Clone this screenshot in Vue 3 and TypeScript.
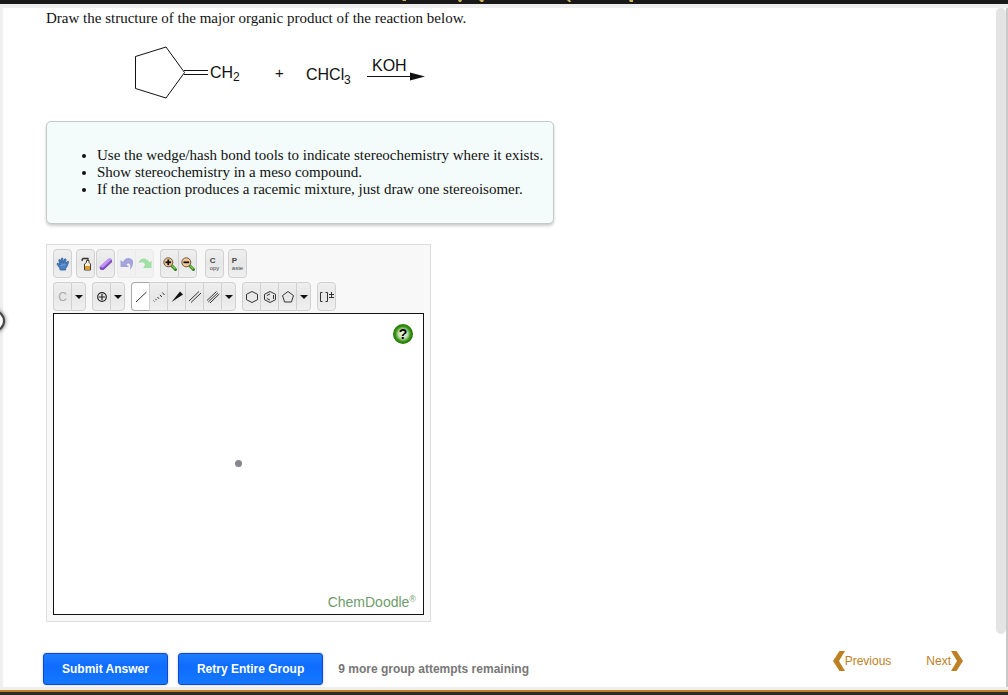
<script setup lang="ts">
import { ref } from 'vue'

interface Tool {
  id: string
  label: string
  kind?: 'drop'
  faded?: boolean
}

interface Group {
  tools: Tool[]
  gap: 'none' | 'hair' | 'tiny' | 'small' | 'medium' | 'large'
}

const topRow: Group[] = [
  { gap: 'none', tools: [{ id: 'hand', label: 'Move' }] },
  { gap: 'small', tools: [{ id: 'clear', label: 'Clear' }] },
  { gap: 'hair', tools: [{ id: 'erase', label: 'Erase' }] },
  {
    gap: 'tiny',
    tools: [
      { id: 'undo', label: 'Undo', faded: true },
      { id: 'redo', label: 'Redo', faded: true },
    ],
  },
  {
    gap: 'medium',
    tools: [
      { id: 'zoomin', label: 'Zoom in' },
      { id: 'zoomout', label: 'Zoom out' },
    ],
  },
  { gap: 'large', tools: [{ id: 'copy', label: 'Copy' }] },
  { gap: 'small', tools: [{ id: 'paste', label: 'Paste' }] },
]

const bottomRow: Group[] = [
  {
    gap: 'none',
    tools: [
      { id: 'carbon', label: 'Carbon' },
      { id: 'elements', label: 'More elements', kind: 'drop' },
    ],
  },
  {
    gap: 'medium',
    tools: [
      { id: 'charge', label: 'Increase charge' },
      { id: 'charges', label: 'More charges', kind: 'drop' },
    ],
  },
  {
    gap: 'medium',
    tools: [
      { id: 'single', label: 'Single bond' },
      { id: 'hash', label: 'Hash bond' },
      { id: 'wedge', label: 'Wedge bond' },
      { id: 'double', label: 'Double bond' },
      { id: 'triple', label: 'Triple bond' },
      { id: 'bonds', label: 'More bonds', kind: 'drop' },
    ],
  },
  {
    gap: 'medium',
    tools: [
      { id: 'hexane', label: 'Cyclohexane' },
      { id: 'benzene', label: 'Benzene' },
      { id: 'pentane', label: 'Cyclopentane' },
      { id: 'rings', label: 'More rings', kind: 'drop' },
    ],
  },
  { gap: 'medium', tools: [{ id: 'bracket', label: 'Bracket' }] },
]

const rows: Group[][] = [topRow, bottomRow]

const hints: string[] = [
  'Use the wedge/hash bond tools to indicate stereochemistry where it exists.',
  'Show stereochemistry in a meso compound.',
  'If the reaction produces a racemic mixture, just draw one stereoisomer.',
]

const active = ref('single')
const attempts = ref(9)
</script>

<template>
  <div class="page">
    <header class="topbar">
      <svg width="260" height="3" viewBox="0 0 260 3" aria-hidden="true">
        <path d="M2 0h4v1h-3zM58 0h4l-1 2h-2zM79 0h5l-1 2h-2zM167 0h3l1 2h-2zM229 0h4v2h-3z" fill="#cdb257" />
      </svg>
    </header>

    <div class="frame">
      <main class="content">
        <p class="question">Draw the structure of the major organic product of the reaction below.</p>

        <svg class="reaction" width="400" height="70" viewBox="46 36 400 70" role="img" aria-label="Reaction scheme">
          <g fill="none" stroke="#111" stroke-width="1">
            <path d="M184.5 72.5L166 47L135.5 56.5V88.5L166 98Z" />
            <path d="M184 70.5H208M184 74.5H208M367 76.5H412" />
          </g>
          <path d="M410 72.5L425 76.5L410 80.5Z" fill="#111" />
          <g class="formula">
            <text x="210" y="78">CH</text>
            <text class="sub" x="233" y="81">2</text>
            <text class="plus" x="275" y="78">+</text>
            <text x="306" y="80">CHCl</text>
            <text class="sub" x="344" y="84">3</text>
            <text x="372" y="71">KOH</text>
          </g>
        </svg>

        <section class="hints">
          <ul>
            <li v-for="hint in hints" :key="hint">{{ hint }}</li>
          </ul>
        </section>

        <section class="sketcher">
          <div v-for="(row, r) in rows" :key="r" class="toolbar">
            <div v-for="(group, g) in row" :key="g" class="group" :class="'gap-' + group.gap">
              <button
                v-for="tool in group.tools"
                :key="tool.id"
                type="button"
                class="tool"
                :class="{ drop: tool.kind === 'drop', faded: tool.faded, active: active === tool.id }"
                :aria-label="tool.label"
                @click="active = tool.id"
              >
                <svg v-if="tool.kind === 'drop'" width="8" height="4" viewBox="0 0 8 4"><path d="M0 0H8L4 4Z" fill="#111" /></svg>
                <span v-else-if="tool.id === 'copy'" class="word"><b>C</b><i>opy</i></span>
                <span v-else-if="tool.id === 'paste'" class="word"><b>P</b><i>aste</i></span>
                <span v-else-if="tool.id === 'carbon'" class="carbon">C</span>
                <svg v-else width="16" height="16" viewBox="0 0 16 16">
                  <g v-if="tool.id === 'hand'">
                    <path d="M5.2 14L4.7 12L2.2 8.5Q1.6 7 3 7.2L4.8 9L3.8 4.2Q4 3 5.1 3.6L6.3 7L6.4 2.4Q7 1.5 7.9 2.4L8.4 6.8L9.6 3Q10.6 2.4 11 3.5L10.6 7.4L12.6 5.4Q13.8 5 13.6 6.3L12 10.4L10.6 12.5V14Z" fill="#4a82c4" stroke="#2c5b98" stroke-width=".8" />
                    <path d="M6 9.5Q8 8 10.5 9" fill="none" stroke="#79a8dc" />
                  </g>
                  <g v-else-if="tool.id === 'clear'">
                    <path d="M10 4V2.5H5.500Q4 2.500 4 5" fill="none" stroke="#333" stroke-width="1.3" />
                    <path d="M8.500 4.500H11V6.500L12.500 8V14H6.500V8L8.500 6.500Z" fill="#faf1dc" stroke="#443e35" />
                    <path d="M7 10H12V13.500H7Z" fill="#e09a2a" />
                  </g>
                  <g v-else-if="tool.id === 'erase'">
                    <path d="M1.5 11L10.500 3Q12.500 1.500 14 4V5.500L5.500 13.500L2 13Z" fill="#8a50d4" />
                    <path d="M1.5 10.500L10.500 2.500Q12 1.500 13.500 3.500L5 11.500Z" fill="#be95f8" />
                    <path d="M2 13L5.5 13.5L14 5.500" fill="none" stroke="#69409c" />
                  </g>
                  <path v-else-if="tool.id === 'undo'" d="M1.5 4L4 6Q6 1.5 10 2Q15 3 14 8Q13.5 11.5 11 14Q12 8.5 10 7.5Q8.5 7 7.5 8.5L10 11H1.5Z" fill="#a3a4dc" />
                  <path v-else-if="tool.id === 'redo'" d="M14.500 4.500L12.500 6.500Q10 2 6 2.500Q2.500 3 1.500 7Q5.500 5.500 7 7Q8 8 8 9L6 12H14.500Z" fill="#a0e0a4" />
                  <g v-else-if="tool.id === 'zoomin' || tool.id === 'zoomout'">
                    <path d="M9.5 9.5L13.5 13.5" stroke="#2f7a20" stroke-width="3" stroke-linecap="round" />
                    <path d="M10 9.8L13.3 13" stroke="#80d245" stroke-width="1.3" />
                    <circle cx="6.3" cy="6.3" r="4.5" fill="#f2c995" stroke="#6e5844" stroke-width="1" />
                    <path d="M3.5 6.3H9.2" stroke="#111" stroke-width="1.8" />
                    <path v-if="tool.id === 'zoomin'" d="M6.3 3.5V9.2" stroke="#111" stroke-width="1.8" />
                  </g>
                  <g v-else-if="tool.id === 'charge'" fill="none" stroke="#222" stroke-width="1.200">
                    <circle cx="8" cy="8" r="4.3" />
                    <path d="M5 8H11M8 5V11" />
                  </g>
                  <path v-else-if="tool.id === 'single'" d="M3 13L13.5 3" fill="none" stroke="#333" />
                  <path v-else-if="tool.id === 'hash'" d="M2.5 11.5L3.5 12.5M4.5 9.8L5.5 11.2M6.5 8L8 9.8M9 5.8L10.8 8M11.3 3.5L13.5 6" fill="none" stroke="#333" />
                  <path v-else-if="tool.id === 'wedge'" d="M2.5 13L11 2.5L14 5.5Z" fill="#111" />
                  <path v-else-if="tool.id === 'double'" d="M2 12L12 2.5M4 13.5L14 4" fill="none" stroke="#333" />
                  <path v-else-if="tool.id === 'triple'" d="M2 11.5L11.5 2.5M3.3 13L13 3.7M5 14L14.3 5" fill="none" stroke="#333" />
                  <path v-else-if="tool.id === 'hexane'" d="M8 2.5L13.5 5.3V10.7L8 13.5L2.5 10.7V5.3Z" fill="none" stroke="#333" />
                  <g v-else-if="tool.id === 'benzene'" fill="none" stroke="#333">
                    <path d="M8 2.5L13.5 5.3V10.7L8 13.5L2.5 10.7V5.3Z" />
                    <path d="M11.5 6V10M8 4.8L4.8 6.6M8 11.2L4.8 9.4" />
                  </g>
                  <path v-else-if="tool.id === 'pentane'" d="M8 2.5L13.5 6.6L11.4 13H4.6L2.5 6.6Z" fill="none" stroke="#333" />
                  <path v-else-if="tool.id === 'bracket'" d="M3.5 3.5H1.5V12.5H3.5M6.5 3.5H8.5V12.5H6.5M10 5.5H15M12.5 3V8M10 8.5H15" fill="none" stroke="#333" />
                </svg>
              </button>
            </div>
          </div>

          <div class="canvas">
            <button type="button" class="help" aria-label="Help">?</button>
            <span class="atom"></span>
            <span class="brand">ChemDoodle<sup>®</sup></span>
          </div>
        </section>

        <footer class="actions">
          <button type="button" class="primary">Submit Answer</button>
          <button type="button" class="primary">Retry Entire Group</button>
          <span class="remaining">{{ attempts }} more group attempts remaining</span>
          <nav class="pager">
            <a href="#previous">
              <svg width="12" height="20" viewBox="0 0 12 20"><path d="M6.5 0H12L6 10L12 20H6.5L0 10Z" fill="#bd8124" /></svg>Previous</a>
            <a href="#next">Next<svg width="12" height="20" viewBox="0 0 12 20"><path d="M5.5 0H0L6 10L0 20H5.5L12 10Z" fill="#bd8124" /></svg></a>
          </nav>
        </footer>
      </main>
      <div class="scroll"><div class="thumb"></div></div>
    </div>
    <div class="bottombar"></div>
    <span class="edge-knob"></span>
  </div>
</template>

<style>
body {
  margin: 0;
  background: #fff;
}
</style>

<style scoped>
.page {
  position: relative;
  display: flex;
  flex-direction: column;
  min-height: 100vh;
  overflow: hidden;
  font-family: "Liberation Sans", Arial, sans-serif;
  color: #111;
}

.topbar {
  height: 4px;
  background: #191919;
  display: flex;
  padding-left: 400px;
}

.frame {
  flex: 1;
  display: flex;
  border-top: 4px solid #efefef;
  border-left: 3px solid #efefef;
  border-bottom: 3px solid #efefef;
}

.edge-knob {
  position: absolute;
  left: -17px;
  top: 310px;
  width: 18px;
  height: 18px;
  border: 2px solid #444;
  border-radius: 50%;
  background: #fff;
  box-shadow: 0 0 4px #555;
}

.content {
  flex: 1;
  min-width: 0;
  padding: 2px 33px 0 40px;
  display: flex;
  flex-direction: column;
  align-items: flex-start;
}

.question {
  margin: 0;
  padding-left: 3px;
  font: 15px/17px "Liberation Serif", "Times New Roman", serif;
}

.reaction {
  display: block;
  margin: 9px 0 0 3px;
}

.formula {
  font: 16px "Liberation Sans", Arial, sans-serif;
  fill: #111;
}

.sub {
  font-size: 12px;
}

.plus {
  font-size: 15px;
}

.hints {
  box-sizing: border-box;
  margin: 15px 0 0 3px;
  padding: 25px 10px;
  border: 1px solid #c2c9c9;
  border-radius: 5px;
  background: #f4fbfb;
  box-shadow: 0 2px 3px #ccc;
  font: 15px/17px "Liberation Serif", "Times New Roman", serif;
}

.hints ul {
  margin: 0;
  padding-left: 40px;
}

.sketcher {
  box-sizing: border-box;
  width: 385px;
  margin: 20px 0 0 3px;
  padding: 4px 6px 6px;
  border: 1px solid #ddd;
  background: #f8f8f8;
}

.toolbar {
  display: flex;
  margin-bottom: 4px;
}

.toolbar + .toolbar {
  margin-bottom: 2px;
}

.group {
  display: flex;
}

.gap-hair {
  margin-left: 1px;
}

.gap-tiny {
  margin-left: 2px;
}

.gap-small {
  margin-left: 4px;
}

.gap-medium {
  margin-left: 6px;
}

.gap-large {
  margin-left: 8px;
}

.tool {
  box-sizing: border-box;
  width: 18px;
  height: 29px;
  padding: 0;
  border: 1px solid #d0d0d0;
  border-right-width: 0;
  background: linear-gradient(#efefef, #e7e7e7 50%, #f0f0f0);
  display: flex;
  align-items: center;
  justify-content: center;
  font-family: inherit;
  color: #444;
}

.tool svg {
  flex: none;
}

.tool:first-child {
  border-radius: 4px 0 0 4px;
}

.tool:last-child {
  width: 19px;
  border-right-width: 1px;
  border-radius: 0 4px 4px 0;
}

.tool:only-child {
  border-radius: 4px;
}

.tool.drop {
  width: 15px;
}

.tool.faded {
  background: #f1f1f1;
  border-color: #eaeaea;
}

.tool.active {
  background: #fff;
  border-color: #aaa;
}

.word {
  display: flex;
  flex-direction: column;
  align-items: flex-start;
}

.word b {
  font-size: 8px;
  line-height: 9px;
}

.word i {
  font-size: 6px;
  line-height: 7px;
  font-style: normal;
}

.carbon {
  font-size: 12px;
  color: #aaa;
}

.canvas {
  position: relative;
  height: 300px;
  border: 1px solid #111;
  background: #fff;
}

.help {
  position: absolute;
  top: 10px;
  right: 10px;
  width: 20px;
  height: 20px;
  padding: 0;
  border: 0;
  border-radius: 50%;
  background: radial-gradient(circle closest-side, #f4fbf0 0, #c0dfae 45%, #3b9417 75%, #1d7400 100%);
  font: bold 14px/20px "Liberation Sans", Arial, sans-serif;
  color: #000;
}

.atom {
  position: absolute;
  left: 50%;
  top: 50%;
  width: 7px;
  height: 7px;
  margin: -4px;
  border-radius: 50%;
  background: #858590;
}

.brand {
  position: absolute;
  right: 7px;
  bottom: 4px;
  font-size: 14px;
  line-height: 16px;
  color: #6f9c6b;
}

.brand sup {
  font-size: 9px;
  line-height: 8px;
  vertical-align: 5px;
}

.actions {
  align-self: stretch;
  display: flex;
  align-items: center;
  margin-top: 29px;
}

.primary {
  height: 32px;
  margin-right: 10px;
  padding: 0 18px;
  border: 1px solid #1446c8;
  border-radius: 3px;
  background: linear-gradient(#1c7dff, #0f6cff 40%, #1478ff);
  box-shadow: 0 0 3px #b5c5e8;
  font: bold 12px/16px "Liberation Sans", Arial, sans-serif;
  color: #fff;
}

.remaining {
  margin-left: 5px;
  font-size: 12px;
  font-weight: bold;
  color: #777;
}

.pager {
  display: flex;
  gap: 35px;
  margin: 0 0 16px auto;
}

.pager a {
  display: flex;
  align-items: center;
  font-size: 12px;
  line-height: 20px;
  color: #bd8124;
  text-decoration: none;
}

.scroll {
  width: 10px;
  border-right: 2px solid #c9c9c9;
}

.thumb {
  height: 626px;
  max-height: 100%;
  border-radius: 5px;
  background: #e4e4e4;
}

.bottombar {
  height: 3px;
  border-top: 2px solid #bd8124;
  background: #2b2b2b;
}
</style>
